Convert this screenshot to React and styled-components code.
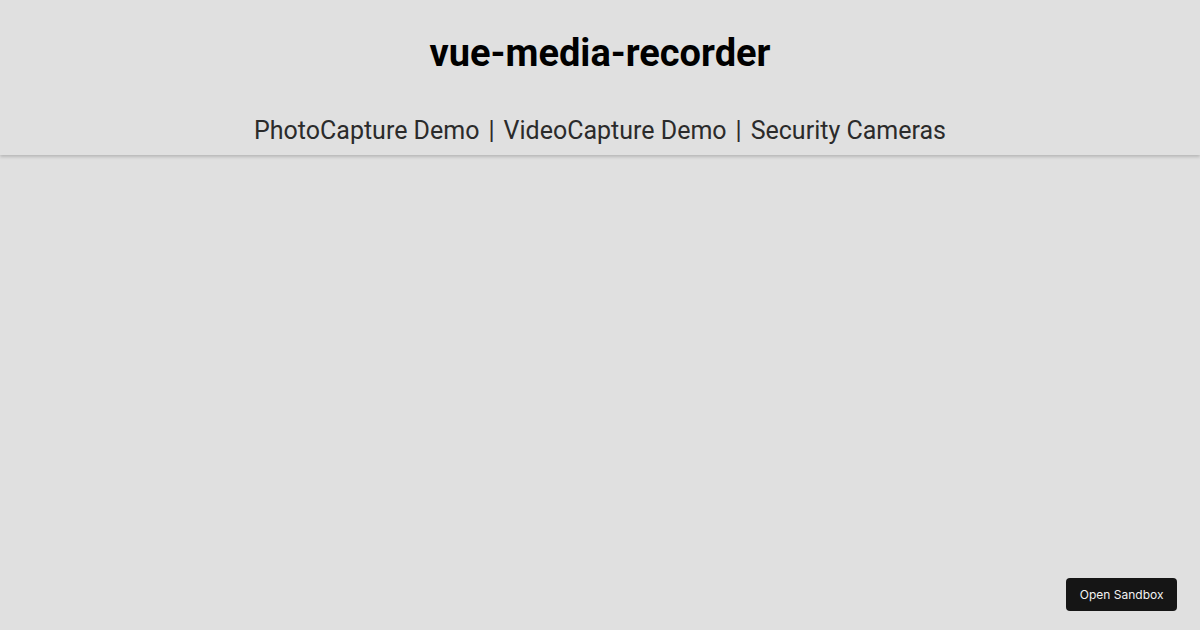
import styled, { createGlobalStyle } from "styled-components";

const GlobalStyle = createGlobalStyle`
  html, body {
    margin: 0;
    padding: 0;
    background: #e0e0e0;
  }
  body {
    font-family: Roboto, 'Liberation Sans', Arial, sans-serif;
  }
`;

const Page = styled.div`
  width: 1200px;
  height: 630px;
  background: #e0e0e0;
  display: flex;
  flex-direction: column;
  position: relative;
  overflow: hidden;
`;

const Header = styled.header`
  display: flex;
  flex-direction: column;
  align-items: center;
  height: 155px;
  box-sizing: border-box;
  padding-top: 30px;
  box-shadow: 0 2px 3px rgba(0, 0, 0, 0.18);
`;

const Title = styled.h1`
  margin: 0;
  font-size: 38px;
  font-weight: 700;
  color: #000;
  line-height: 46px;
`;

const Nav = styled.nav`
  margin-top: 39px;
  display: flex;
  align-items: center;
  font-size: 25px;
  line-height: 32px;
  color: #2b2b2b;
`;

const NavLink = styled.a`
  color: inherit;
  text-decoration: none;
`;

const Divider = styled.span`
  padding: 0 9px;
`;

const Body = styled.main`
  flex: 1;
`;

const SandboxButton = styled.button`
  position: absolute;
  right: 23px;
  bottom: 19px;
  height: 33px;
  padding: 0 13.5px;
  background: #151515;
  color: #f2f2f2;
  border: none;
  border-radius: 4px;
  font-family: Inter, 'Liberation Sans', Arial, sans-serif;
  font-size: 12px;
`;

const links = ["PhotoCapture Demo", "VideoCapture Demo", "Security Cameras"];

const App = () => (
  <Page>
    <GlobalStyle />
    <Header>
      <Title>vue-media-recorder</Title>
      <Nav>
        {links.map((text, i) => (
          <span key={text}>
            {i > 0 && <Divider>|</Divider>}
            <NavLink href="#">{text}</NavLink>
          </span>
        ))}
      </Nav>
    </Header>
    <Body />
    <SandboxButton>Open Sandbox</SandboxButton>
  </Page>
);

export default App;
